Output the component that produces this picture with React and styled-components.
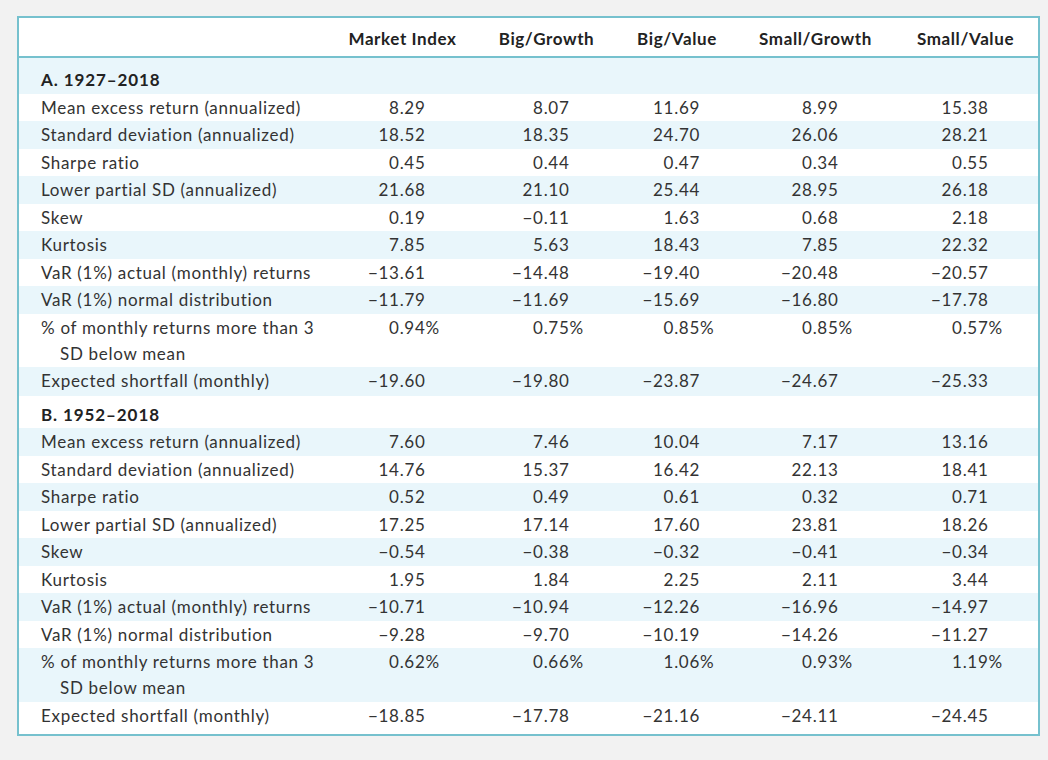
import React from "react";
import styled, { createGlobalStyle } from "styled-components";

const columns = ["Market Index", "Big/Growth", "Big/Value", "Small/Growth", "Small/Value"];

const sections = [
  {
    title: "A. 1927–2018",
    rows: [
      ["Mean excess return (annualized)", ["8.29", "8.07", "11.69", "8.99", "15.38"]],
      ["Standard deviation (annualized)", ["18.52", "18.35", "24.70", "26.06", "28.21"]],
      ["Sharpe ratio", ["0.45", "0.44", "0.47", "0.34", "0.55"]],
      ["Lower partial SD (annualized)", ["21.68", "21.10", "25.44", "28.95", "26.18"]],
      ["Skew", ["0.19", "−0.11", "1.63", "0.68", "2.18"]],
      ["Kurtosis", ["7.85", "5.63", "18.43", "7.85", "22.32"]],
      ["VaR (1%) actual (monthly) returns", ["−13.61", "−14.48", "−19.40", "−20.48", "−20.57"]],
      ["VaR (1%) normal distribution", ["−11.79", "−11.69", "−15.69", "−16.80", "−17.78"]],
      [["% of monthly returns more than 3", "SD below mean"], ["0.94%", "0.75%", "0.85%", "0.85%", "0.57%"]],
      ["Expected shortfall (monthly)", ["−19.60", "−19.80", "−23.87", "−24.67", "−25.33"]],
    ],
  },
  {
    title: "B. 1952–2018",
    rows: [
      ["Mean excess return (annualized)", ["7.60", "7.46", "10.04", "7.17", "13.16"]],
      ["Standard deviation (annualized)", ["14.76", "15.37", "16.42", "22.13", "18.41"]],
      ["Sharpe ratio", ["0.52", "0.49", "0.61", "0.32", "0.71"]],
      ["Lower partial SD (annualized)", ["17.25", "17.14", "17.60", "23.81", "18.26"]],
      ["Skew", ["−0.54", "−0.38", "−0.32", "−0.41", "−0.34"]],
      ["Kurtosis", ["1.95", "1.84", "2.25", "2.11", "3.44"]],
      ["VaR (1%) actual (monthly) returns", ["−10.71", "−10.94", "−12.26", "−16.96", "−14.97"]],
      ["VaR (1%) normal distribution", ["−9.28", "−9.70", "−10.19", "−14.26", "−11.27"]],
      [["% of monthly returns more than 3", "SD below mean"], ["0.62%", "0.66%", "1.06%", "0.93%", "1.19%"]],
      ["Expected shortfall (monthly)", ["−18.85", "−17.78", "−21.16", "−24.11", "−24.45"]],
    ],
  },
];

const App = () => {
  let stripe = 0;

  return (
    <Page>
      <GlobalStyle />
      <Table>
        <HeadRow>
          <span />
          {columns.map((c) => (
            <ColHead key={c}>{c}</ColHead>
          ))}
        </HeadRow>
        {sections.map((section, si) => {
          const headShade = stripe++ % 2 === 0;
          return (
            <React.Fragment key={section.title}>
              <SectionRow $shade={headShade} $first={si === 0}>
                <SectionTitle>{section.title}</SectionTitle>
              </SectionRow>
              {section.rows.map(([label, values], ri) => {
                const shade = stripe++ % 2 === 0;
                const lines = Array.isArray(label) ? label : [label];
                const last = ri === section.rows.length - 1;
                return (
                  <Row key={ri} $shade={shade} $multi={lines.length > 1} $tail={last ? (si === 0 ? 1.5 : 5) : 0}>
                    <Label>
                      {lines.map((l, li) => (
                        <LabelLine key={li} $cont={li > 0}>
                          {l}
                        </LabelLine>
                      ))}
                    </Label>
                    {values.map((v, vi) => {
                      const pct = v.endsWith("%");
                      return (
                        <Cell key={vi}>
                          <Num>{pct ? v.slice(0, -1) : v}</Num>
                          <Suffix>{pct ? "%" : ""}</Suffix>
                        </Cell>
                      );
                    })}
                  </Row>
                );
              })}
            </React.Fragment>
          );
        })}
      </Table>
    </Page>
  );
};

const GlobalStyle = createGlobalStyle`
  body {
    margin: 0;
    background: #f2f2f2;
    font-family: Lato, "Open Sans", sans-serif;
    color: #333;
  }
`;

const Page = styled.div`
  padding: 16px 8px 24px 17px;
`;

const Table = styled.div`
  width: 1023px;
  box-sizing: border-box;
  background: #fff;
  border: 2px solid #76c1ce;
`;

const grid = `
  display: grid;
  grid-template-columns: 312px 143px 145px 116px 161px 139px;
`;

const HeadRow = styled.div`
  ${grid};
  padding: 7px 0 4px;
  line-height: 27px;
  border-bottom: 2px solid #76c1ce;
`;

const ColHead = styled.div`
  text-align: center;
  font-weight: 700;
  font-size: 17px;
  letter-spacing: 0.6px;
  color: #222;
`;

const SectionRow = styled.div`
  padding: ${(p) => (p.$first ? "8px" : "4.5px")} 0 0;
  line-height: 27.5px;
  background: ${(p) => (p.$shade ? "#e9f6fb" : "#fff")};
`;

const SectionTitle = styled.div`
  padding-left: 22px;
  font-weight: 700;
  font-size: 17px;
  letter-spacing: 0.9px;
  color: #222;
`;

const Row = styled.div`
  ${grid};
  align-items: start;
  font-size: 17px;
  letter-spacing: 0.7px;
  line-height: ${(p) => (p.$multi ? "26.3px" : "27.5px")};
  padding: ${(p) => (p.$multi ? "1px" : "0")} 0 ${(p) => p.$tail}px;
  background: ${(p) => (p.$shade ? "#e9f6fb" : "#fff")};
`;

const Label = styled.div`
  padding-left: 22px;
`;

const LabelLine = styled.div`
  padding-left: ${(p) => (p.$cont ? "19px" : "0")};
`;

const Cell = styled.div`
  display: flex;
  justify-content: center;
  font-variant-numeric: tabular-nums;
`;

const Num = styled.span`
  width: 62px;
  text-align: right;
`;

const Suffix = styled.span`
  width: 16px;
  text-align: left;
`;

export default App;
